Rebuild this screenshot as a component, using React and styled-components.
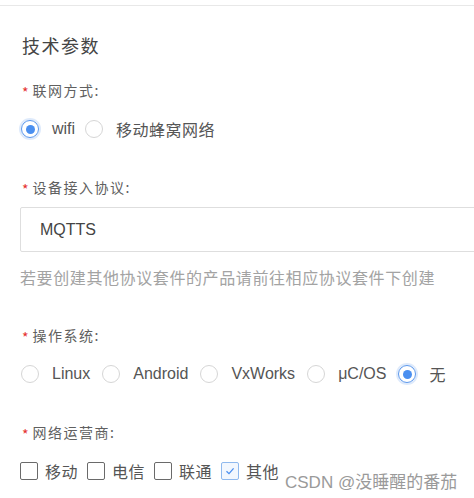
import React from 'react';
import styled, { createGlobalStyle } from 'styled-components';

const GlobalStyle = createGlobalStyle`
  html, body {
    margin: 0;
    padding: 0;
    background: #fff;
  }
  body {
    font-family: "Liberation Sans", "Noto Sans CJK SC", sans-serif;
  }
`;

const Page = styled.div`
  position: relative;
  width: 474px;
  height: 498px;
  padding-top: 5px;
  box-sizing: border-box;
  overflow: hidden;
  background: #fff;
`;

const Card = styled.div`
  display: flex;
  flex-direction: column;
  gap: 37px;
  border-top: 1px solid #e8e8e8;
  padding: 27px 0 0 20px;
`;

const Title = styled.div`
  font-family: "Noto Sans CJK SC", sans-serif;
  font-size: 18px;
  line-height: 24px;
  letter-spacing: 1.5px;
  color: #444;
  padding-left: 2px;
  margin-bottom: -14px;
`;

const Field = styled.div`
  display: flex;
  flex-direction: column;
  gap: ${props => props.gap ?? 18}px;
`;

const Label = styled.div`
  display: flex;
  align-items: center;
  height: 20px;
  font-family: "Noto Sans CJK SC", sans-serif;
  font-size: 14px;
  letter-spacing: 1.5px;
  color: #606060;
  padding-left: 2px;
`;

const Star = styled.span`
  color: #e5312f;
  font-size: 14px;
  margin-right: 4px;
  margin-top: 3px;
  letter-spacing: 0;
`;

const OptionRow = styled.div`
  display: flex;
  align-items: center;
  height: 22px;
  gap: ${props => props.gap ?? 9}px;
`;

const Option = styled.label`
  display: flex;
  align-items: center;
  gap: ${props => props.gap ?? 13}px;
  font-size: 16px;
  color: #555;
  white-space: nowrap;
`;

const Radio = styled.span`
  position: relative;
  width: 18px;
  height: 18px;
  border-radius: 50%;
  box-sizing: border-box;
  margin-left: 1px;
  border: 1px solid ${props => (props.checked ? '#5b97ec' : '#d6d6d6')};
  box-shadow: ${props => (props.checked ? '0 0 0 2px rgba(91, 151, 236, 0.2)' : 'none')};

  &::after {
    content: '';
    display: ${props => (props.checked ? 'block' : 'none')};
    position: absolute;
    left: 3.5px;
    top: 3.5px;
    width: 9px;
    height: 9px;
    border-radius: 50%;
    background: #4a8ff0;
  }
`;

const Box = styled.span`
  display: flex;
  align-items: center;
  justify-content: center;
  width: 18px;
  height: 18px;
  box-sizing: border-box;
  border-radius: 2px;
  border: 1.5px solid ${props => (props.checked ? '#8fb9ee' : '#6a6a6a')};
  background: ${props => (props.checked ? '#f2f7fe' : '#fff')};

  svg {
    width: 10px;
    height: 10px;
  }
`;

const CnText = styled.span`
  font-family: "Noto Sans CJK SC", sans-serif;
  letter-spacing: 0.5px;
`;

const Input = styled.div`
  display: flex;
  align-items: center;
  height: 45px;
  margin-right: -20px;
  padding-left: 19px;
  box-sizing: border-box;
  border: 1px solid #dedede;
  border-radius: 2px;
  font-size: 16px;
  color: #444;
`;

const Help = styled.div`
  font-family: "Noto Sans CJK SC", sans-serif;
  font-size: 16px;
  line-height: 22px;
  letter-spacing: 0.6px;
  color: #a3a3a3;
  margin-top: 4px;
`;

const Watermark = styled.div`
  position: absolute;
  left: 285px;
  top: 469px;
  font-size: 17px;
  line-height: 24px;
  color: #9a9a9a;
  white-space: nowrap;

  span {
    font-family: "Noto Sans CJK SC", sans-serif;
  }
`;

const Check = () => (
  <svg viewBox="0 0 10 10">
    <path d="M1.5 5.2 L4 7.6 L8.6 2.4" fill="none" stroke="#4a8ff0" strokeWidth="1.3" />
  </svg>
);

const osList = [
  { name: 'Linux' },
  { name: 'Android' },
  { name: 'VxWorks' },
  { name: 'μC/OS' },
  { name: '无', cn: true, checked: true },
];

const carriers = [
  { name: '移动' },
  { name: '电信' },
  { name: '联通' },
  { name: '其他', checked: true },
];

export default function App() {
  return (
    <Page>
      <GlobalStyle />
      <Card>
        <Title>技术参数</Title>

        <Field>
          <Label>
            <Star>*</Star>联网方式:
          </Label>
          <OptionRow>
            <Option>
              <Radio checked />
              wifi
            </Option>
            <Option>
              <Radio />
              <CnText>移动蜂窝网络</CnText>
            </Option>
          </OptionRow>
        </Field>

        <Field gap={10}>
          <Label>
            <Star>*</Star>设备接入协议:
          </Label>
          <Input>MQTTS</Input>
          <Help>若要创建其他协议套件的产品请前往相应协议套件下创建</Help>
        </Field>

        <Field>
          <Label>
            <Star>*</Star>操作系统:
          </Label>
          <OptionRow gap={11}>
            {osList.map(os => (
              <Option key={os.name}>
                <Radio checked={os.checked} />
                {os.cn ? <CnText>{os.name}</CnText> : os.name}
              </Option>
            ))}
          </OptionRow>
        </Field>

        <Field>
          <Label>
            <Star>*</Star>网络运营商:
          </Label>
          <OptionRow gap={9}>
            {carriers.map(c => (
              <Option key={c.name} gap={7}>
                <Box checked={c.checked}>{c.checked && <Check />}</Box>
                <CnText>{c.name}</CnText>
              </Option>
            ))}
          </OptionRow>
        </Field>
      </Card>
      <Watermark>
        CSDN @<span>没睡醒的番茄</span>
      </Watermark>
    </Page>
  );
}
